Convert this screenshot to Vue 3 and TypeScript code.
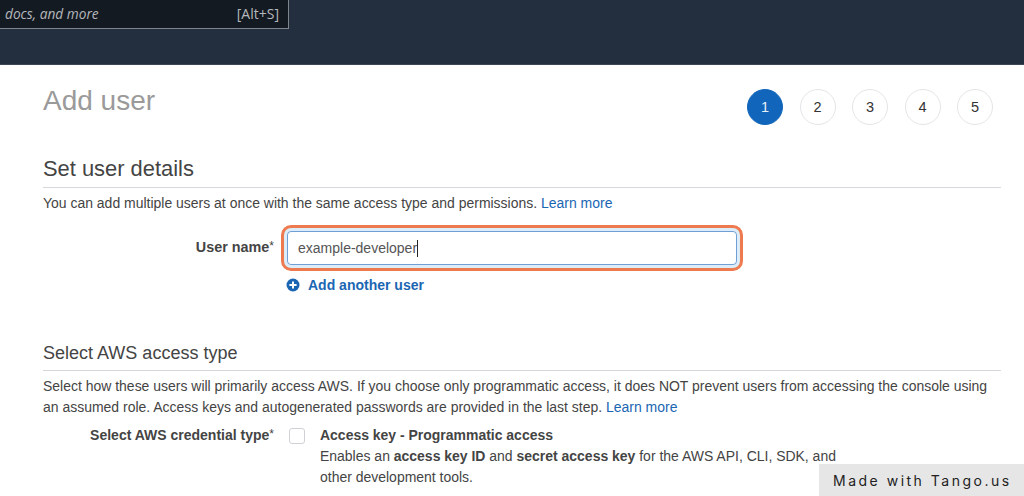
<script setup lang="ts">
const steps: number[] = [1, 2, 3, 4, 5]
</script>

<template>
  <div class="page">
    <header class="topbar">
      <div class="search">
        <span class="hint">docs, and more</span>
        <span class="keys">[Alt+S]</span>
      </div>
    </header>
    <main class="content">
      <div class="title-row">
        <h1>Add user</h1>
        <ol class="steps">
          <li v-for="s in steps" :key="s" :class="{ active: s === 1 }">{{ s }}</li>
        </ol>
      </div>

      <h2 class="section-main">Set user details</h2>
      <p class="desc first">You can add multiple users at once with the same access type and permissions. <a>Learn more</a></p>

      <div class="name-row">
        <label>User name<sup>*</sup></label>
        <div class="highlight">
          <div class="input"><span>example-developer</span><i class="caret"></i></div>
        </div>
      </div>
      <a class="add">
        <svg width="14" height="14" viewBox="0 0 14 14">
          <circle cx="7" cy="7" r="6.5" fill="#1b66b3" />
          <path d="M7 3.4v7.2M3.4 7h7.2" stroke="#fff" stroke-width="2" />
        </svg>
        Add another user
      </a>

      <h2 class="section-sub">Select AWS access type</h2>
      <p class="desc second">Select how these users will primarily access AWS. If you choose only programmatic access, it does NOT prevent users from accessing the console using an assumed role. Access keys and autogenerated passwords are provided in the last step. <a>Learn more</a></p>

      <div class="cred-row">
        <label>Select AWS credential type<sup>*</sup></label>
        <span class="check"></span>
        <div class="cred-text">
          <strong>Access key - Programmatic access</strong>
          <p>Enables an <b>access key ID</b> and <b>secret access key</b> for the AWS API, CLI, SDK, and other development tools.</p>
        </div>
      </div>
    </main>
    <div class="tango">Made with Tango.us</div>
  </div>
</template>

<style>
html, body { margin: 0; background: #fff; overflow: hidden; }
</style>

<style scoped>
.page {
  position: relative;
  width: 1024px;
  height: 496px;
  overflow: hidden;
  background: #fff;
  font-family: "Liberation Sans", Arial, sans-serif;
  color: #444;
}
.topbar {
  height: 65px;
  box-sizing: border-box;
  background: #232f3e;
  border-bottom: 1px solid #3a4656;
}
.search {
  width: 289px;
  height: 29px;
  box-sizing: border-box;
  padding: 0 9px 2px 5px;
  display: flex;
  align-items: center;
  justify-content: space-between;
  background: #141a22;
  border: 1px solid #7f858c;
  border-width: 0 1px 1px 0;
  color: #b4b8bc;
  font-family: "Open Sans", sans-serif;
  font-size: 13.7px;
}
.hint { font-style: italic; }
.keys { font-size: 14px; }
.content {
  padding: 0 23px 0 43px;
}
.title-row {
  display: flex;
  justify-content: space-between;
  align-items: flex-start;
  height: 89px;
}
h1 {
  margin: 20px 0 0;
  font-size: 28px;
  line-height: 32px;
  font-weight: 400;
  color: #9a9a9a;
}
.steps {
  list-style: none;
  display: flex;
  gap: 16.5px;
  margin: 24px 8px 0 0;
  padding: 0;
}
.steps li {
  width: 36px;
  height: 36px;
  box-sizing: border-box;
  border: 1px solid #e4e5e8;
  border-radius: 50%;
  display: flex;
  align-items: center;
  justify-content: center;
  font-size: 14.5px;
  color: #333;
}
.steps li.active {
  background: #1166bb;
  border-color: #1166bb;
  color: #e8f0f8;
}
h2 {
  margin: 0;
  font-weight: 400;
  color: #444;
  border-bottom: 1px solid #d5d7da;
}
.section-main {
  font-size: 21.9px;
  line-height: 30px;
  padding-bottom: 3px;
}
.section-sub {
  font-size: 18px;
  line-height: 22px;
  margin-top: 47px;
  padding-bottom: 6px;
}
.desc {
  margin: 0;
  font-size: 13.97px;
  line-height: 21px;
  color: #444;
}
.desc a { color: #1b66b3; }
.desc.first { margin-top: 5px; }
.desc.second { margin-top: 5px; }
.name-row {
  display: flex;
  align-items: center;
  margin-top: 11px;
}
label {
  font-size: 14px;
  font-weight: 700;
  color: #444;
  text-align: right;
}
sup {
  font-size: 12px;
  font-weight: 400;
  line-height: 0;
  vertical-align: 2px;
}
.name-row label {
  width: 231px;
  margin: -2px 7px 0 0;
  font-size: 14.4px;
}
.highlight {
  width: 462px;
  height: 46px;
  box-sizing: border-box;
  border: 3px solid #ee7b50;
  border-radius: 10px;
  padding: 3px;
  background: #dcecf9;
}
.input {
  height: 100%;
  box-sizing: border-box;
  border: 1px solid #6f9fd4;
  border-radius: 4px;
  background: #fff;
  display: flex;
  align-items: center;
  padding-left: 10px;
  font-size: 14px;
  color: #555;
}
.caret {
  width: 1px;
  height: 17px;
  background: #222;
}
.add {
  display: flex;
  align-items: center;
  gap: 8px;
  margin: 4px 0 0 243px;
  font-size: 14px;
  font-weight: 700;
  color: #1b66b3;
  line-height: 20px;
}
.cred-row {
  display: grid;
  grid-template-columns: 231px 16px 1fr;
  margin-top: 7px;
}
.cred-row label { line-height: 20px; }
.check {
  width: 16px;
  height: 16px;
  box-sizing: border-box;
  border: 1px solid #cfd1d4;
  border-radius: 3px;
  margin: 3px 0 0 15px;
}
.cred-text {
  margin-left: 30px;
  width: 530px;
  font-size: 13.97px;
  line-height: 21px;
  color: #444;
}
.cred-text strong { display: block; }
.cred-text p { margin: 0; }
.tango {
  position: absolute;
  right: 0;
  bottom: 0;
  width: 205px;
  height: 32px;
  box-sizing: border-box;
  padding-left: 14px;
  background: #e6e6e6;
  display: flex;
  align-items: center;
  font-family: "Inter", sans-serif;
  font-size: 14px;
  letter-spacing: 2.5px;
  color: #222;
}
</style>
